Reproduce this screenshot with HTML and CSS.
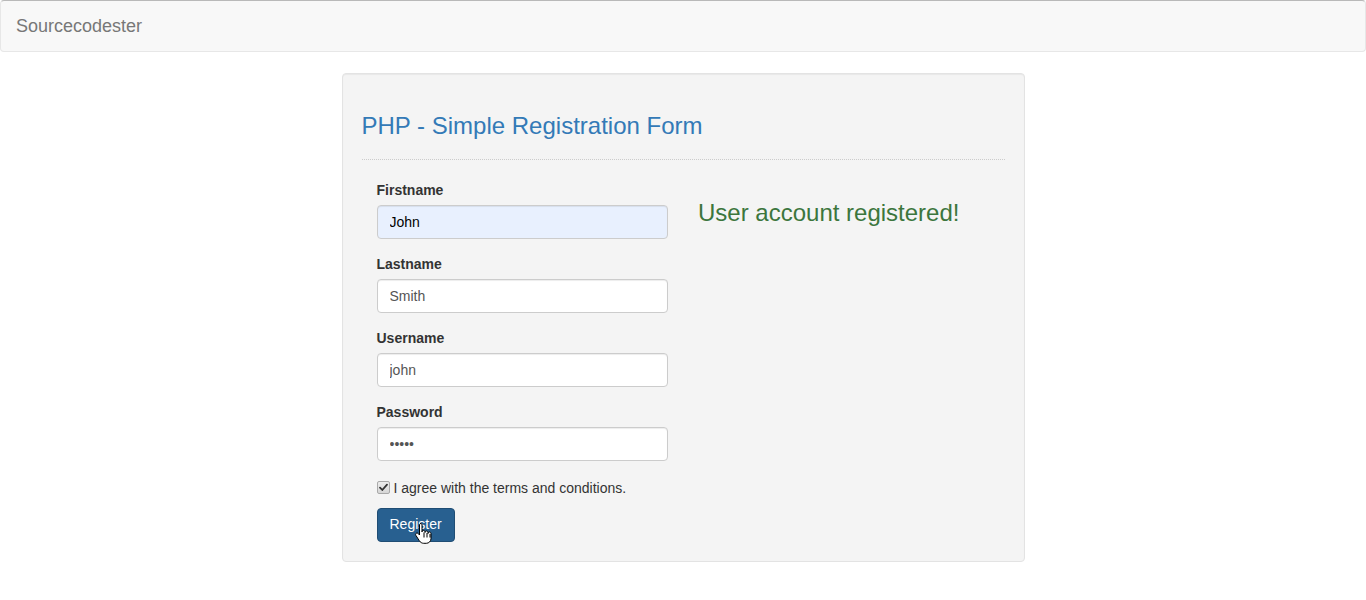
FILE: index.html
```html
<!DOCTYPE html>
<html lang="en">
<head>
<meta charset="utf-8">
<title>PHP - Simple Registration Form</title>
<link rel="stylesheet" href="styles.css">
</head>
<body>
<nav class="navbar">
  <a class="navbar-brand" href="#">Sourcecodester</a>
</nav>
<div class="page">
  <div class="well">
    <h3 class="title">PHP - Simple Registration Form</h3>
    <hr class="divider">
    <div class="cols">
      <form class="col form">
        <div class="form-group">
          <label class="label">Firstname</label>
          <input class="form-control autofill" type="text" value="John">
        </div>
        <div class="form-group">
          <label class="label">Lastname</label>
          <input class="form-control" type="text" value="Smith">
        </div>
        <div class="form-group">
          <label class="label">Username</label>
          <input class="form-control" type="text" value="john">
        </div>
        <div class="form-group">
          <label class="label">Password</label>
          <input class="form-control" type="password" value="admin">
        </div>
        <label class="agree">
          <input class="check-input" type="checkbox" checked>
          <span class="check-box" aria-hidden="true">
            <svg width="9" height="9" viewBox="0 0 9 9"><path d="M1 4.6l2.3 2.4L8 1.6" fill="none" stroke="#333" stroke-width="1.8" stroke-linecap="round" stroke-linejoin="round"/></svg>
          </span>
          <span>I agree with the terms and conditions.</span>
        </label>
        <div class="btn-wrap">
          <button class="btn" type="button">Register</button>
          <svg class="cursor" width="18" height="24" viewBox="0 0 18 24" aria-hidden="true">
            <path d="M6 1.5c-.9 0-1.5.7-1.5 1.5v10l-1.4-1.5c-.6-.6-1.6-.6-2.1 0-.5.5-.5 1.3-.1 1.9l3.4 5.3c1 1.6 2.6 2.6 4.4 2.6h2.6c2.600 0 4.7-2.1 4.7-4.7v-5.1c0-.8-.7-1.5-1.5-1.5s-1.5.7-1.5 1.5v-1c0-.8-.7-1.5-1.5-1.5s-1.5.7-1.5 1.5v-.6c0-.8-.7-1.5-1.5-1.5s-1.5.7-1.5 1.5V3c0-.8-.6-1.5-1.5-1.5z" fill="#fff" stroke="#000" stroke-width="1" stroke-linejoin="round"/>
            <path d="M9 10.5v5M12 11v4.5M15 12v3.5" stroke="#000" stroke-width="1" fill="none"/>
          </svg>
        </div>
      </form>
      <div class="col">
        <h3 class="success">User account registered!</h3>
      </div>
    </div>
  </div>
</div>
</body>
</html>
```

FILE: styles.css
```css
* { box-sizing: border-box; }
html, body { margin: 0; padding: 0; }
body {
  font-family: "Liberation Sans", Arial, Helvetica, sans-serif;
  font-size: 14px;
  line-height: 1.42857;
  color: #333;
  background: #fff;
}
.navbar {
  min-height: 50px;
  height: 52px;
  background: #f8f8f8;
  border: 1px solid #e7e7e7;
  border-top-color: #b9b9b9;
  border-radius: 4px;
  margin-bottom: 20px;
  padding: 0 15px;
  display: flex;
  align-items: center;
}
.navbar-brand {
  color: #777;
  font-size: 18px;
  line-height: 20px;
  text-decoration: none;
  padding: 15px 0;
}
.page {
  display: flex;
  justify-content: center;
}
.well {
  width: 50%;
  padding: 19px;
  margin-top: 1px;
  margin-bottom: 20px;
  background: #f4f4f4;
  border: 1px solid #e3e3e3;
  border-radius: 4px;
  box-shadow: inset 0 1px 1px rgba(0,0,0,.05);
}
.title {
  margin: 20px 0 10px;
  font-size: 24px;
  font-weight: 500;
  line-height: 1.1;
  color: #337ab7;
}
.divider {
  margin: 20px 0;
  border: 0;
  border-top: 1px dotted #ccc;
}
.cols {
  display: grid;
  grid-template-columns: 1fr 1fr;
}
.col {
  padding: 0 15px;
}
.form-group {
  margin-bottom: 15px;
}
.label {
  display: block;
  font-weight: bold;
  margin-bottom: 5px;
  line-height: 20px;
}
.form-control {
  display: block;
  width: 100%;
  height: 34px;
  padding: 6px 12px;
  font-family: inherit;
  font-size: 14px;
  line-height: 1.42857;
  color: #555;
  background: #fff;
  border: 1px solid #ccc;
  border-radius: 4px;
  box-shadow: inset 0 1px 1px rgba(0,0,0,.075);
  outline: none;
}
.form-control.autofill {
  background: #e8f0fe;
  color: #000;
}
.agree {
  display: flex;
  align-items: center;
  gap: 4px;
  margin-top: 17px;
  line-height: 20px;
  height: 20px;
}
.check-input {
  position: absolute;
  opacity: 0;
  width: 0;
  height: 0;
  margin: 0;
}
.check-box {
  width: 13px;
  height: 13px;
  flex: none;
  display: flex;
  align-items: center;
  justify-content: center;
  border: 1px solid #a9a9a9;
  border-radius: 2px;
  background: linear-gradient(#ececec, #d6d6d6);
  margin-top: -2px;
}
.btn-wrap {
  position: relative;
  margin-top: 10px;
  display: inline-block;
}
.btn {
  display: inline-block;
  padding: 6px 12px;
  font-family: inherit;
  font-size: 14px;
  line-height: 1.42857;
  color: #fff;
  background: #286090;
  border: 1px solid #204d74;
  border-radius: 4px;
  cursor: pointer;
}
.cursor {
  position: absolute;
  left: 38px;
  top: 14px;
}
.success {
  margin: 20px 0 10px;
  font-size: 24px;
  font-weight: 500;
  line-height: 1.1;
  color: #3c763d;
}
```
